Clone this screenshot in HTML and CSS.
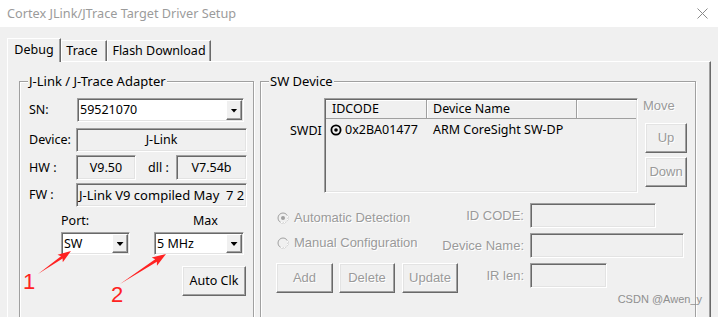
FILE: index.html
```html
<!DOCTYPE html>
<html>
<head>
<meta charset="utf-8">
<title>Cortex JLink/JTrace Target Driver Setup</title>
<link rel="stylesheet" href="styles.css">
</head>
<body>
<div class="window">
  <div class="titlebar">
    <span class="title">Cortex JLink/JTrace Target Driver Setup</span>
    <svg class="close" width="11" height="11" viewBox="0 0 11 11"><path d="M0.5 0.5L10.5 10.5M10.5 0.5L0.5 10.5" stroke="#8a8a8a" stroke-width="1" fill="none"/></svg>
  </div>
  <div class="client">
    <div class="tabs">
      <div class="tab tab-debug active">Debug</div>
      <div class="tab tab-trace">Trace</div>
      <div class="tab tab-flash">Flash Download</div>
    </div>
    <div class="panel">
      <div class="group g-left">
        <span class="group-title">J-Link / J-Trace Adapter</span>
        <div class="row r-sn">
          <span class="lbl w48">SN:</span>
          <div class="combo w167"><span class="ctext">59521070</span><span class="dd"></span></div>
        </div>
        <div class="row r-dev">
          <span class="lbl w47">Device:</span>
          <div class="field ro w171">J-Link</div>
        </div>
        <div class="row r-hw">
          <span class="lbl w47">HW :</span>
          <div class="field ro w60">V9.50</div>
          <span class="lbl dll">dll :</span>
          <div class="field ro w71">V7.54b</div>
        </div>
        <div class="row r-fw">
          <span class="lbl w47">FW :</span>
          <div class="field ro left w171">J-Link V9 compiled May  7 2</div>
        </div>
        <div class="row r-portlbl">
          <span class="lbl port-lbl">Port:</span>
          <span class="lbl max-lbl">Max</span>
        </div>
        <div class="row r-combos">
          <div class="combo w69"><span class="ctext">SW</span><span class="dd"></span></div>
          <div class="combo w90 mhz"><span class="ctext">5 MHz</span><span class="dd"></span></div>
        </div>
        <div class="row r-auto">
          <div class="btn autoclk">Auto Clk</div>
        </div>
      </div>

      <div class="group g-right">
        <span class="group-title">SW Device</span>
        <div class="sw-top">
          <span class="swdi">SWDI</span>
          <div class="listview">
            <div class="lv-head">
              <div class="lv-col c1">IDCODE</div>
              <div class="lv-col c2">Device Name</div>
              <div class="lv-col c3"></div>
            </div>
            <div class="lv-row">
              <div class="lv-cell c1">
                <svg class="sel" width="12" height="12" viewBox="0 0 12 12"><circle cx="6" cy="6" r="4.6" fill="none" stroke="#000" stroke-width="1.8"/><circle cx="6" cy="6" r="1.8" fill="#000"/></svg>
                <span>0x2BA01477</span>
              </div>
              <div class="lv-cell c2">ARM CoreSight SW-DP</div>
            </div>
          </div>
          <div class="move-col">
            <span class="dis move">Move</span>
            <div class="btn dis up">Up</div>
            <div class="btn dis down">Down</div>
          </div>
        </div>
        <div class="sw-bottom">
          <div class="radio ra">
            <svg width="12" height="12" viewBox="0 0 12 12"><circle cx="6" cy="6" r="5" fill="#f0f0f0" stroke="#a0a0a0" stroke-width="1"/><path d="M10.3 3.5A5 5 0 0 1 3.5 10.3" stroke="#fff" stroke-width="1" fill="none"/><circle cx="6" cy="6" r="2" fill="#a0a0a0"/></svg>
            <span class="dis">Automatic Detection</span>
          </div>
          <span class="dis flbl">ID CODE:</span>
          <div class="fcell"><div class="field w126"></div></div>

          <div class="radio rb">
            <svg width="12" height="12" viewBox="0 0 12 12"><circle cx="6" cy="6" r="5" fill="#f0f0f0" stroke="#a0a0a0" stroke-width="1"/><path d="M10.3 3.5A5 5 0 0 1 3.5 10.3" stroke="#fff" stroke-width="1" fill="none"/></svg>
            <span class="dis">Manual Configuration</span>
          </div>
          <span class="dis flbl">Device Name:</span>
          <div class="fcell"><div class="field w154"></div></div>

          <div class="btnrow">
            <div class="btn dis b-add">Add</div>
            <div class="btn dis b-del">Delete</div>
            <div class="btn dis b-upd">Update</div>
          </div>
          <span class="dis flbl irl">IR len:</span>
          <div class="fcell"><div class="field w77 irf"></div></div>
        </div>
      </div>
    </div>
  </div>

  <svg class="annot" width="718" height="317" viewBox="0 0 718 317">
    <g fill="#ff2222">
      <g transform="translate(38 274) rotate(-34.9)">
        <polygon points="0,0 29,-1.4 27,-4.6 40.2,0 27,4.6 29,1.4"/>
      </g>
      <g transform="translate(120 284) rotate(-33.1)">
        <polygon points="0,0 43,-1.5 41,-4.8 54.9,0 41,4.8 43,1.5"/>
      </g>
      <text x="23" y="289" class="num">1</text>
      <text x="111" y="302" class="num">2</text>
    </g>
  </svg>
  <div class="watermark">CSDN @Awen_y</div>
</div>
</body>
</html>
```

FILE: styles.css
```css
* { box-sizing: border-box; }
html, body { margin: 0; padding: 0; }
body {
  width: 718px;
  height: 317px;
  overflow: hidden;
  background: #f0f0f0;
  font-family: "Noto Sans", "Open Sans", sans-serif;
  font-size: 12.5px;
  line-height: 16px;
  color: #000;
}
.window { position: relative; width: 718px; height: 317px; overflow: hidden; }

.titlebar {
  height: 27px;
  background: #fff;
  display: flex;
  align-items: center;
  justify-content: space-between;
  padding: 0 10px 2px 7px;
}
.title { color: #9b9b9b; font-size: 12.7px; }
.close { display: block; margin-top: 2px; }

.client { padding: 11px 0 0 7px; }

.tabs { display: flex; align-items: flex-end; height: 23px; }
.tab {
  height: 21px;
  background: #f0f0f0;
  border-top: 1px solid #fff;
  border-left: 1px solid #fff;
  border-right: 1px solid #696969;
  box-shadow: inset -1px 0 0 #a0a0a0;
  display: flex;
  align-items: center;
  justify-content: center;
  padding-bottom: 1px;
}
.tab.active { height: 24px; margin-bottom: -1px; position: relative; z-index: 1; padding-bottom: 2px; }
.tab-debug { width: 54px; }
.tab-trace { width: 46px; padding-right: 4px; }
.tab-flash { width: 104px; }

.panel {
  width: 704px;
  height: 262px;
  border-top: 1px solid #fff;
  border-left: 1px solid #fff;
  border-right: 1px solid #696969;
  box-shadow: inset -1px 0 0 #a0a0a0;
  display: flex;
  gap: 6px;
  padding: 19px 0 0 11px;
}

.group {
  position: relative;
  height: 260px;
  border: 1px solid #a0a0a0;
  box-shadow: inset 1px 1px 0 #fff, 1px 1px 0 #fff;
}
.group-title {
  position: absolute;
  top: -9px;
  left: 8px;
  padding: 0 1px;
  background: #f0f0f0;
  line-height: 16px;
  font-size: 13px;
}
.g-left { width: 235px; padding: 16px 0 0 9px; }
.g-right { width: 436px; padding: 16px 0 0 0; }

.row { display: flex; align-items: center; }
.lbl { display: block; white-space: nowrap; }
.w47 { width: 47px; }
.w48 { width: 48px; }
.w60 { width: 60px; }
.w69 { width: 69px; }
.w71 { width: 71px; }
.w77 { width: 77px; }
.w90 { width: 90px; }
.w126 { width: 126px; }
.w154 { width: 154px; }
.w167 { width: 167px; }
.w171 { width: 171px; }

.r-sn { height: 24px; }
.r-dev { height: 24px; margin-top: 6px; }
.r-hw { height: 25px; margin-top: 3px; }
.r-fw { height: 24px; margin-top: 3px; }
.r-portlbl { height: 25px; padding-top: 3px; }
.r-combos { height: 23px; }
.r-auto { margin-top: 11px; }

.dll { width: 40px; padding-left: 12px; }
.port-lbl { margin-left: 32px; width: 93px; }
.max-lbl { padding-left: 39px; }

.combo, .field {
  height: 100%;
  border: 1px solid;
  border-color: #a0a0a0 #fff #fff #a0a0a0;
  box-shadow: inset 1px 1px 0 #696969, inset -1px -1px 0 #e3e3e3;
}
.combo { display: flex; background: #fff; }
.r-combos .combo:first-child { margin-left: 32px; }
.mhz { margin-left: 24px; }
.ctext { flex: 1; padding-left: 2px; display: flex; align-items: center; white-space: nowrap; }
.dd {
  width: 16px;
  margin: 1px 1px 1px 0;
  background: #f0f0f0;
  border: 1px solid;
  border-color: #fff #696969 #696969 #fff;
  box-shadow: inset -1px -1px 0 #a0a0a0;
  display: flex;
  align-items: center;
  justify-content: center;
}
.dd::after {
  content: "";
  width: 7px;
  height: 4px;
  background: #000;
  clip-path: polygon(0 0, 100% 0, 50% 100%);
  margin-top: 1px;
}

.field { background: #f0f0f0; }
.field.ro {
  display: flex;
  align-items: center;
  justify-content: center;
  white-space: nowrap;
  overflow: hidden;
}
.field.ro.left { justify-content: flex-start; padding-left: 2px; white-space: pre; font-size: 13px; }

.btn {
  height: 30px;
  background: #f0f0f0;
  border: 1px solid;
  border-color: #fff #696969 #696969 #fff;
  box-shadow: inset -1px -1px 0 #a0a0a0, inset 1px 1px 0 #e3e3e3;
  display: flex;
  align-items: center;
  justify-content: center;
  padding-bottom: 1px;
}
.autoclk { width: 64px; margin-left: 153px; }

.dis {
  font-family: "Liberation Sans", Arial, sans-serif;
  font-size: 13px;
  color: #9a9a9a;
  text-shadow: 1px 1px 0 #fff;
  white-space: nowrap;
}
.btn.dis { display: flex; }

/* SW device */
.sw-top { display: flex; height: 95px; padding-left: 29px; }
.swdi { width: 34px; margin-top: 25px; }
.listview {
  width: 314px;
  height: 95px;
  border: 1px solid;
  border-color: #a0a0a0 #fff #fff #a0a0a0;
  box-shadow: inset 1px 1px 0 #696969, inset -1px -1px 0 #e3e3e3;
  padding: 1px;
  background: #f0f0f0;
}
.lv-head {
  display: flex;
  height: 19px;
  border-bottom: 1px solid #a0a0a0;
}
.lv-col {
  height: 18px;
  padding-left: 6px;
  display: flex;
  align-items: center;
  border-right: 1px solid #a0a0a0;
  box-shadow: inset 1px 1px 0 #fff;
  white-space: nowrap;
}
.lv-col.c1 { width: 101px; padding-left: 6px; box-shadow: inset 0 1px 0 #fff; }
.lv-col.c2 { width: 150px; }
.lv-col.c3 { flex: 1; border-right: none; }
.lv-row { display: flex; height: 22px; align-items: center; }
.lv-cell { display: flex; align-items: center; white-space: nowrap; }
.lv-cell.c1 { width: 101px; padding-left: 4px; }
.lv-cell.c2 { padding-left: 6px; }
.sel { display: block; margin-right: 3px; }

.move-col { display: flex; flex-direction: column; margin-left: 5px; width: 44px; }
.move { line-height: 16px; }
.up, .down { width: 42px; margin-left: 2px; }
.up { margin-top: 9px; }
.down { margin-top: 4px; }

.sw-bottom {
  display: grid;
  grid-template-columns: 199px 70px 1fr;
  grid-template-rows: 25px 25px 30px;
  row-gap: 5px;
  margin-top: 10px;
}
.radio { display: flex; align-items: center; padding-left: 16px; gap: 5px; }
.radio svg { display: block; }
.ra { padding-top: 5px; }
.rb { padding-bottom: 5px; }
.flbl { display: flex; align-items: center; justify-content: flex-end; padding-right: 6px; }
.irl { align-self: start; height: 25px; }
.fcell { display: flex; }
.fcell .field { height: 25px; }
.btnrow { display: flex; padding-left: 15px; gap: 6px; }
.b-add { width: 57px; }
.b-del { width: 56px; }
.b-upd { width: 56px; margin-left: 1px; }

.annot { position: absolute; left: 0; top: 0; pointer-events: none; }
.num { font-family: "Liberation Sans", Arial, sans-serif; font-size: 22px; }

.watermark {
  position: absolute;
  right: 16px;
  top: 292px;
  font-family: "Liberation Sans", Arial, sans-serif;
  font-size: 11px;
  line-height: 14px;
  color: #8f8f8f;
}
```
